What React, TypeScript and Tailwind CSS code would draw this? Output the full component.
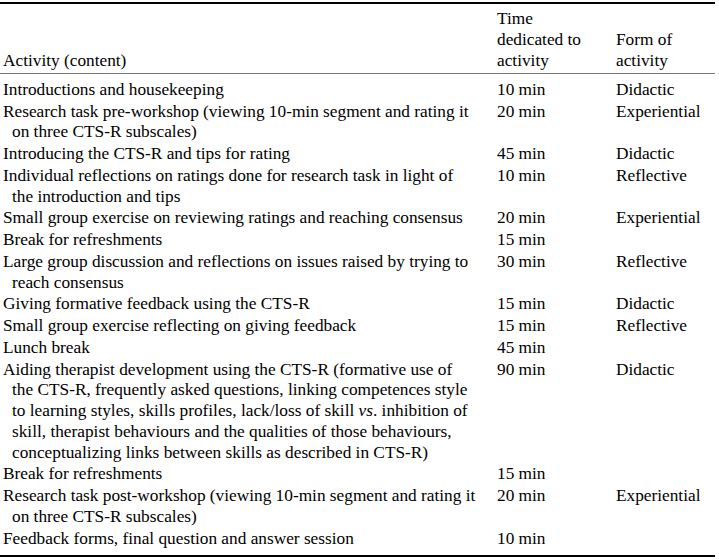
import React from "react";

type Row = { lines: React.ReactNode[]; time: string; form: string };

const rows: Row[] = [
  { lines: ["Introductions and housekeeping"], time: "10 min", form: "Didactic" },
  {
    lines: ["Research task pre-workshop (viewing 10-min segment and rating it", "on three CTS-R subscales)"],
    time: "20 min",
    form: "Experiential",
  },
  { lines: ["Introducing the CTS-R and tips for rating"], time: "45 min", form: "Didactic" },
  {
    lines: ["Individual reflections on ratings done for research task in light of", "the introduction and tips"],
    time: "10 min",
    form: "Reflective",
  },
  { lines: ["Small group exercise on reviewing ratings and reaching consensus"], time: "20 min", form: "Experiential" },
  { lines: ["Break for refreshments"], time: "15 min", form: "" },
  {
    lines: ["Large group discussion and reflections on issues raised by trying to", "reach consensus"],
    time: "30 min",
    form: "Reflective",
  },
  { lines: ["Giving formative feedback using the CTS-R"], time: "15 min", form: "Didactic" },
  { lines: ["Small group exercise reflecting on giving feedback"], time: "15 min", form: "Reflective" },
  { lines: ["Lunch break"], time: "45 min", form: "" },
  {
    lines: [
      "Aiding therapist development using the CTS-R (formative use of",
      "the CTS-R, frequently asked questions, linking competences style",
      <>
        to learning styles, skills profiles, lack/loss of skill <i>vs</i>. inhibition of
      </>,
      "skill, therapist behaviours and the qualities of those behaviours,",
      "conceptualizing links between skills as described in CTS-R)",
    ],
    time: "90 min",
    form: "Didactic",
  },
  { lines: ["Break for refreshments"], time: "15 min", form: "" },
  {
    lines: ["Research task post-workshop (viewing 10-min segment and rating it", "on three CTS-R subscales)"],
    time: "20 min",
    form: "Experiential",
  },
  { lines: ["Feedback forms, final question and answer session"], time: "10 min", form: "" },
];

export default function App() {
  return (
    <div className="w-[719px] h-[560px] bg-white text-black overflow-hidden font-['Liberation_Serif','Times_New_Roman',serif]">
      <div className="w-[715px] mt-[2px] border-t-2 border-b-2 border-black text-[17.3px] leading-[20.75px] whitespace-nowrap">
        <div className="grid grid-cols-[497px_119px_1fr] pt-[5px] pb-[2px] border-b border-[#777]">
          <div className="pl-[3px] self-end">Activity (content)</div>
          <div className="self-end">
            <div>Time</div>
            <div>dedicated to</div>
            <div>activity</div>
          </div>
          <div className="self-end">
            <div>Form of</div>
            <div>activity</div>
          </div>
        </div>
        <div className="pt-[5px] pb-[5px]">
          {rows.map((r, i) => (
            <div key={i} className="grid grid-cols-[497px_119px_1fr] py-[0.5px]">
              <div className="pl-[3px]">
                {r.lines.map((l, j) => (
                  <div key={j} className={j > 0 ? "pl-[9px]" : ""}>
                    {l}
                  </div>
                ))}
              </div>
              <div>{r.time}</div>
              <div>{r.form}</div>
            </div>
          ))}
        </div>
      </div>
    </div>
  );
}
